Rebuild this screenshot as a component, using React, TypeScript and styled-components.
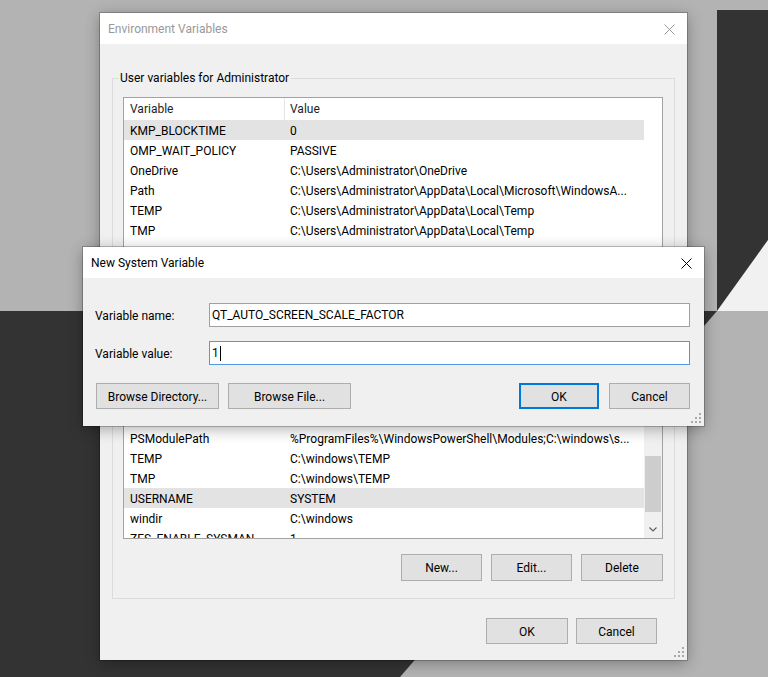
import React from 'react';
import styled, { createGlobalStyle } from 'styled-components';

const GlobalStyle = createGlobalStyle`
  html, body {
    margin: 0;
    padding: 0;
  }
  body {
    font-family: Roboto, "Noto Sans", sans-serif;
    font-size: 12px;
    color: #000;
  }
  * { box-sizing: border-box; }
`;

const Desktop = styled.div`
  position: relative;
  width: 768px;
  height: 677px;
  overflow: hidden;
  background: #b3b3b3;
`;

const Wallpaper = styled.svg`
  position: absolute;
  inset: 0;
`;

const Window = styled.div<{ $left: number; $top: number; $width: number; $height: number }>`
  position: absolute;
  left: ${p => p.$left}px;
  top: ${p => p.$top}px;
  width: ${p => p.$width}px;
  height: ${p => p.$height}px;
  display: flex;
  flex-direction: column;
  background: #f0f0f0;
  box-shadow: 0 0 0 1px rgba(0, 0, 0, 0.22), 0 3px 14px rgba(0, 0, 0, 0.32);
`;

const TitleBar = styled.div<{ $active?: boolean }>`
  flex: none;
  height: 31px;
  display: flex;
  align-items: center;
  background: #fff;
  padding: 1px 0 0 8px;
  color: ${p => (p.$active ? '#000' : '#999')};
`;

const Title = styled.span`
  flex: 1;
`;

const CloseButton = styled.div`
  width: 36px;
  height: 30px;
  display: flex;
  align-items: center;
  justify-content: center;
`;

const EnvBody = styled.div`
  flex: 1;
  display: flex;
  flex-direction: column;
  padding: 26px 12px 0 12px;
`;

const GroupBox = styled.fieldset<{ $gap?: number }>`
  margin: ${p => p.$gap ?? 0}px 0 0 0;
  padding: 0 11px 17px 10px;
  border: 1px solid #dcdcdc;
  min-width: 0;
  display: flex;
  flex-direction: column;
`;

const Legend = styled.legend`
  padding: 0 2px;
  margin-left: -5px;
  line-height: 16px;
  font-size: 12px;
`;

const ListView = styled.div<{ $height: number }>`
  margin-top: 11px;
  height: ${p => p.$height}px;
  display: flex;
  border: 1px solid #a3a3a3;
  background: #fff;
  overflow: hidden;
`;

const ListMain = styled.div`
  flex: 1;
  min-width: 0;
  display: flex;
  flex-direction: column;
`;

const ListHeader = styled.div`
  flex: none;
  height: 22px;
  display: flex;
`;

const HeaderCell = styled.div<{ $width?: number }>`
  ${p => (p.$width ? `width: ${p.$width}px;` : 'flex: 1;')}
  padding: 1px 0 0 ${p => (p.$width ? 6 : 5)}px;
  line-height: 21px;
  color: #1e1e1e;
  border-right: ${p => (p.$width ? '1px solid #e5e5e5' : 'none')};
`;

const ListBody = styled.div`
  flex: 1;
  overflow: hidden;
`;

const Row = styled.div<{ $selected?: boolean }>`
  height: 20px;
  display: flex;
  align-items: center;
  padding-top: 1px;
  background: ${p => (p.$selected ? '#e3e3e3' : 'transparent')};
`;

const NameCell = styled.div`
  width: 161px;
  padding-left: 6px;
  white-space: nowrap;
  overflow: hidden;
`;

const ValueCell = styled.div`
  flex: 1;
  min-width: 0;
  padding-left: 5px;
  white-space: nowrap;
  overflow: hidden;
`;

const Gutter = styled.div`
  flex: none;
  width: 18px;
  background: #fff;
`;

const ScrollBar = styled.div`
  flex: none;
  width: 18px;
  display: flex;
  flex-direction: column;
  background: #f0f0f0;
`;

const ScrollArrow = styled.div`
  flex: none;
  height: 17px;
  display: flex;
  align-items: center;
  justify-content: center;
`;

const ScrollTrack = styled.div`
  flex: 1;
  padding: 0 1px;
`;

const Thumb = styled.div<{ $offset: number; $size: number }>`
  margin-top: ${p => p.$offset}px;
  height: ${p => p.$size}px;
  background: #cdcdcd;
`;

const ButtonRow = styled.div<{ $top: number }>`
  display: flex;
  align-items: center;
  margin-top: ${p => p.$top}px;
`;

const Spacer = styled.div`
  flex: 1;
`;

const Button = styled.button<{ $width: number; $height?: number; $default?: boolean; $gap?: number }>`
  width: ${p => p.$width}px;
  height: ${p => p.$height ?? 27}px;
  margin-left: ${p => p.$gap ?? 0}px;
  padding: 1px 0 0 0;
  font: inherit;
  line-height: 14px;
  color: #000;
  background: #e1e1e1;
  border: 1px solid ${p => (p.$default ? '#0078d7' : '#adadad')};
  box-shadow: ${p => (p.$default ? 'inset 0 0 0 1px #0078d7' : 'none')};
`;

const Footer = styled.div`
  display: flex;
  justify-content: flex-end;
  margin-top: 19px;
  padding-right: 18px;
`;

const ModalBody = styled.div`
  flex: 1;
  display: flex;
  flex-direction: column;
  padding: 25px 14px 0 12px;
`;

const FieldRow = styled.div<{ $top?: number }>`
  display: flex;
  align-items: center;
  margin-top: ${p => p.$top ?? 0}px;
`;

const FieldLabel = styled.div`
  width: 114px;
  padding-top: 1px;
  line-height: 14px;
`;

const TextBox = styled.div<{ $focused?: boolean }>`
  flex: 1;
  height: 24px;
  display: flex;
  align-items: center;
  padding-left: 2px;
  line-height: 14px;
  background: #fff;
  border: 1px solid ${p => (p.$focused ? '#4f98e3' : '#a0a0a0')};
`;

const Caret = styled.span`
  display: inline-block;
  width: 1px;
  height: 15px;
  margin-left: 1px;
  background: #000;
`;

const Grip = styled.svg`
  position: absolute;
  right: 2px;
  bottom: 2px;
`;

type EnvVar = { name: string; value: string; selected?: boolean };

const userVars: EnvVar[] = [
  { name: 'KMP_BLOCKTIME', value: '0', selected: true },
  { name: 'OMP_WAIT_POLICY', value: 'PASSIVE' },
  { name: 'OneDrive', value: 'C:\\Users\\Administrator\\OneDrive' },
  { name: 'Path', value: 'C:\\Users\\Administrator\\AppData\\Local\\Microsoft\\WindowsA...' },
  { name: 'TEMP', value: 'C:\\Users\\Administrator\\AppData\\Local\\Temp' },
  { name: 'TMP', value: 'C:\\Users\\Administrator\\AppData\\Local\\Temp' },
];

const systemVars: EnvVar[] = [
  { name: 'PROCESSOR_IDENTIFIER', value: 'Intel64 Family 6 Model 85 Stepping 7, GenuineIntel' },
  { name: 'PROCESSOR_LEVEL', value: '6' },
  { name: 'PROCESSOR_REVISION', value: '5507' },
  { name: 'PSModulePath', value: '%ProgramFiles%\\WindowsPowerShell\\Modules;C:\\windows\\s...' },
  { name: 'TEMP', value: 'C:\\windows\\TEMP' },
  { name: 'TMP', value: 'C:\\windows\\TEMP' },
  { name: 'USERNAME', value: 'SYSTEM', selected: true },
  { name: 'windir', value: 'C:\\windows' },
  { name: 'ZES_ENABLE_SYSMAN', value: '1' },
];

const CloseIcon = ({ color }: { color: string }) => (
  <svg width="11" height="11" viewBox="0 0 11 11">
    <path d="M0.5 0.5 L10.5 10.5 M10.5 0.5 L0.5 10.5" stroke={color} strokeWidth="1" fill="none" />
  </svg>
);

const Chevron = ({ up }: { up?: boolean }) => (
  <svg width="8" height="5" viewBox="0 0 8 5">
    <path d={up ? 'M0.5 4.5 L4 1 L7.5 4.5' : 'M0.5 0.5 L4 4 L7.5 0.5'} stroke="#606060" strokeWidth="1.2" fill="none" />
  </svg>
);

const ResizeGrip = () => (
  <Grip width="11" height="11" viewBox="0 0 11 11">
    {[
      [8, 0],
      [4, 4],
      [8, 4],
      [0, 8],
      [4, 8],
      [8, 8],
    ].map(([x, y]) => (
      <rect key={`${x}-${y}`} x={x} y={y} width="2" height="2" fill="#a9a9a9" />
    ))}
  </Grip>
);

const VariableList = ({ rows, height, scroll }: { rows: EnvVar[]; height: number; scroll?: boolean }) => (
  <ListView $height={height}>
    <ListMain>
      <ListHeader>
        <HeaderCell $width={161}>Variable</HeaderCell>
        <HeaderCell>Value</HeaderCell>
      </ListHeader>
      <ListBody>
        {rows.map(r => (
          <Row key={r.name} $selected={r.selected}>
            <NameCell>{r.name}</NameCell>
            <ValueCell>{r.value}</ValueCell>
          </Row>
        ))}
      </ListBody>
    </ListMain>
    {scroll ? (
      <ScrollBar>
        <ScrollArrow>
          <Chevron up />
        </ScrollArrow>
        <ScrollTrack>
          <Thumb $offset={93} $size={56} />
        </ScrollTrack>
        <ScrollArrow>
          <Chevron />
        </ScrollArrow>
      </ScrollBar>
    ) : (
      <Gutter />
    )}
  </ListView>
);

const App = () => (
  <>
    <GlobalStyle />
    <Desktop>
      <Wallpaper width="768" height="677" viewBox="0 0 768 677">
        <rect x="0" y="0" width="768" height="677" fill="#b3b3b3" />
        <rect x="717" y="10" width="51" height="301" fill="#333" />
        <polygon points="768,240 768,311 717,311" fill="#f1f1f1" />
        <polygon points="0,311 717,311 400,677 0,677" fill="#333" />
      </Wallpaper>

      <Window $left={100} $top={13} $width={587} $height={647}>
        <TitleBar>
          <Title>Environment Variables</Title>
          <CloseButton>
            <CloseIcon color="#9a9a9a" />
          </CloseButton>
        </TitleBar>
        <EnvBody>
          <GroupBox>
            <Legend>User variables for Administrator</Legend>
            <VariableList rows={userVars} height={156} />
            <ButtonRow $top={13}>
              <Spacer />
              <Button $width={81}>New...</Button>
              <Button $width={81} $gap={9}>Edit...</Button>
              <Button $width={82} $gap={9}>Delete</Button>
            </ButtonRow>
          </GroupBox>
          <GroupBox $gap={7}>
            <Legend>System variables</Legend>
            <VariableList rows={systemVars} height={194} scroll />
            <ButtonRow $top={15}>
              <Spacer />
              <Button $width={81}>New...</Button>
              <Button $width={81} $gap={9}>Edit...</Button>
              <Button $width={82} $gap={9}>Delete</Button>
            </ButtonRow>
          </GroupBox>
          <Footer>
            <Button $width={82} $height={26}>OK</Button>
            <Button $width={81} $height={26} $gap={8}>Cancel</Button>
          </Footer>
        </EnvBody>
        <ResizeGrip />
      </Window>

      <Window $left={83} $top={247} $width={621} $height={179}>
        <TitleBar $active>
          <Title>New System Variable</Title>
          <CloseButton>
            <CloseIcon color="#000" />
          </CloseButton>
        </TitleBar>
        <ModalBody>
          <FieldRow>
            <FieldLabel>Variable name:</FieldLabel>
            <TextBox>QT_AUTO_SCREEN_SCALE_FACTOR</TextBox>
          </FieldRow>
          <FieldRow $top={14}>
            <FieldLabel>Variable value:</FieldLabel>
            <TextBox $focused>
              1<Caret />
            </TextBox>
          </FieldRow>
          <ButtonRow $top={18}>
            <Button $width={123} $height={26} $gap={1}>Browse Directory...</Button>
            <Button $width={123} $height={26} $gap={9}>Browse File...</Button>
            <Spacer />
            <Button $width={80} $height={26} $default>OK</Button>
            <Button $width={81} $height={26} $gap={10}>Cancel</Button>
          </ButtonRow>
        </ModalBody>
        <ResizeGrip />
      </Window>
    </Desktop>
  </>
);

export default App;
